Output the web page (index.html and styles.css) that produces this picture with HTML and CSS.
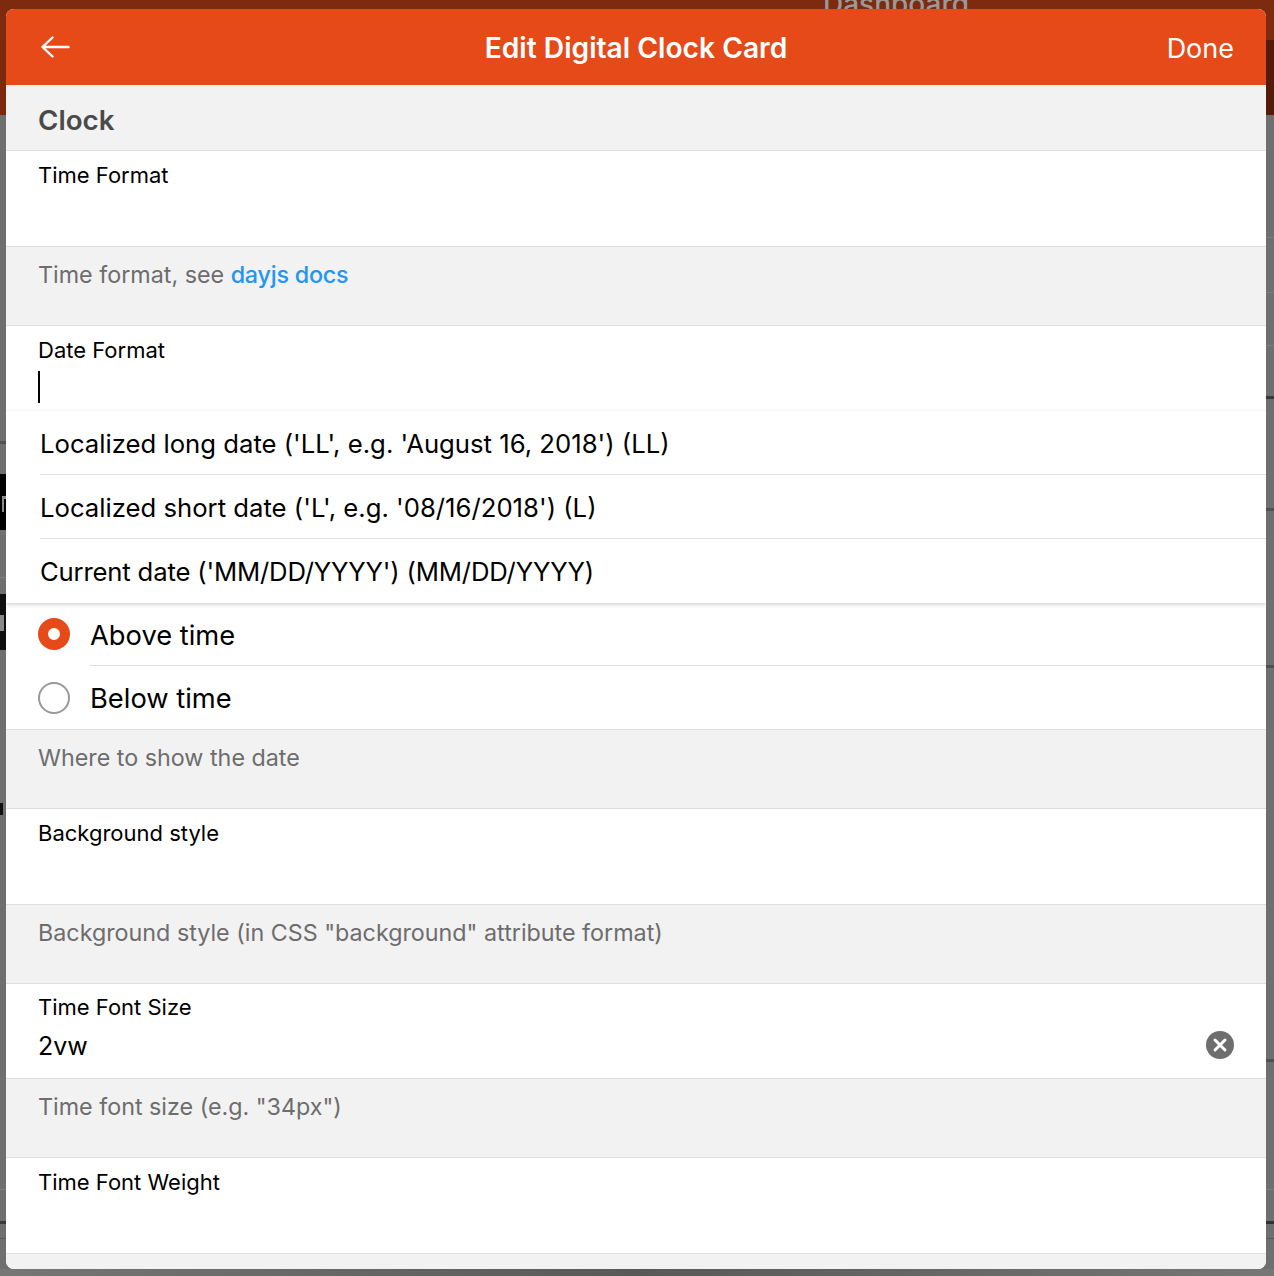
FILE: index.html
```html
<!DOCTYPE html>
<html lang="en">
<head>
<meta charset="utf-8">
<title>Edit Digital Clock Card</title>
<link rel="stylesheet" href="styles.css">
</head>
<body>
<div class="backdrop-title">Dashboard</div>
<main class="sheet">
  <header class="navbar">
    <button class="nav-back" aria-label="Back">
      <svg class="back-icon" viewBox="0 0 30 24" width="30" height="24"><path d="M28.5 12H2.5M12.5 2.5 2.5 12l10 9.500" fill="none" stroke="#fff" stroke-width="2.400" stroke-linecap="round" stroke-linejoin="round"/></svg>
    </button>
    <h1 class="nav-title">Edit Digital Clock Card</h1>
    <span class="nav-done">Done</span>
  </header>

  <h2 class="block-title">Clock</h2>

  <section class="field">
    <label class="field-label">Time Format</label>
    <div class="field-value"></div>
  </section>
  <p class="help">Time format, see <a class="help-link" href="#">dayjs docs</a></p>

  <section class="field field-date">
    <label class="field-label">Date Format</label>
    <div class="field-value"><span class="caret"></span></div>
  </section>
  <ul class="suggestions">
    <li class="suggestion">Localized long date ('LL', e.g. 'August 16, 2018') (LL)</li>
    <li class="suggestion">Localized short date ('L', e.g. '08/16/2018') (L)</li>
    <li class="suggestion">Current date ('MM/DD/YYYY') (MM/DD/YYYY)</li>
  </ul>

  <ul class="radios">
    <li class="radio-row">
      <span class="radio radio-on"></span>
      <span class="radio-text radio-text-line">Above time</span>
    </li>
    <li class="radio-row">
      <span class="radio"></span>
      <span class="radio-text">Below time</span>
    </li>
  </ul>
  <p class="help">Where to show the date</p>

  <section class="field">
    <label class="field-label">Background style</label>
    <div class="field-value"></div>
  </section>
  <p class="help">Background style (in CSS "background" attribute format)</p>

  <section class="field field-short">
    <label class="field-label">Time Font Size</label>
    <div class="field-value field-filled">
      <span class="value-text">2vw</span>
      <svg class="clear-icon" viewBox="0 0 28 28" width="28" height="28"><circle cx="14" cy="14" r="14" fill="#6e6e6e"/><path d="M9 9l10 10M19 9 9 19" stroke="#fff" stroke-width="3" stroke-linecap="round"/></svg>
    </div>
  </section>
  <p class="help">Time font size (e.g. "34px")</p>

  <section class="field">
    <label class="field-label">Time Font Weight</label>
    <div class="field-value"></div>
  </section>
  <div class="sheet-tail"></div>
</main>
</body>
</html>
```

FILE: styles.css
```css
* { box-sizing: border-box; }

html, body { margin: 0; height: 1276px; overflow: hidden; }

body {
  position: relative;
  padding: 9px 8px 7px 6px;
  font-family: Inter, "Liberation Sans", sans-serif;
  color: #000;
  background:
    /* dimmed page behind the sheet: top bar */
    linear-gradient(#7d2a0e 0 40px, transparent 40px) 0 0 / 100% 115px no-repeat,
    linear-gradient(90deg, #7b280e 0 6px, #541b08 6px) 0 0 / 100% 115px no-repeat,
    /* left edge */
    linear-gradient(#8a8a8a 0 0) 2px 496px / 4px 3px no-repeat,
    linear-gradient(#8a8a8a 0 0) 2px 496px / 2px 16px no-repeat,
    linear-gradient(#000 0 0) 0 474px / 6px 56px no-repeat,
    linear-gradient(#8a8a8a 0 0) 0 615px / 4px 16px no-repeat,
    linear-gradient(#0f0f0f 0 0) 0 594px / 6px 56px no-repeat,
    linear-gradient(#505050 0 0) 0 441px / 6px 3px no-repeat,
    linear-gradient(#7e7e7e 0 0) 0 577px / 6px 1px no-repeat,
    linear-gradient(#111 0 0) 0 803px / 3px 12px no-repeat,
    linear-gradient(#7e7e7e 0 0) 0 1189px / 6px 1px no-repeat,
    linear-gradient(#3a3a3a 0 0) 0 1221px / 6px 3px no-repeat,
    linear-gradient(#5a5a5a 0 0) 0 1238px / 6px 1px no-repeat,
    /* right edge */
    linear-gradient(#7e7e7e 0 0) 1266px 237px / 8px 1px no-repeat,
    linear-gradient(#7e7e7e 0 0) 1266px 292px / 8px 1px no-repeat,
    linear-gradient(#7e7e7e 0 0) 1266px 345px / 8px 1px no-repeat,
    linear-gradient(#3a3a3a 0 0) 1266px 396px / 8px 3px no-repeat,
    linear-gradient(#505050 0 0) 1266px 508px / 8px 3px no-repeat,
    linear-gradient(#505050 0 0) 1266px 665px / 8px 3px no-repeat,
    linear-gradient(#505050 0 0) 1266px 1059px / 8px 3px no-repeat,
    linear-gradient(#7e7e7e 0 0) 1266px 1189px / 8px 1px no-repeat,
    linear-gradient(#333 0 0) 1266px 1221px / 8px 3px no-repeat,
    linear-gradient(#5a5a5a 0 0) 1266px 1238px / 8px 1px no-repeat,
    /* bottom edge */
    linear-gradient(90deg, #767676, #585858 50%, #767676) 0 1269px / 100% 7px no-repeat,
    #6f6f6f;
}

.backdrop-title {
  position: absolute;
  top: -8px;
  left: 823px;
  font-size: 28px;
  line-height: 24px;
  font-weight: 500;
  color: #9a9a9a;
}

.sheet {
  position: relative;
  display: flex;
  flex-direction: column;
  height: 1260px;
  overflow: hidden;
  border-radius: 8px;
  background: #fff;
}

.navbar {
  flex: none;
  display: grid;
  grid-template-columns: 1fr auto 1fr;
  align-items: center;
  height: 76px;
  padding: 0 32px 0 34px;
  background: #e64a19;
  color: #fff;
}

.nav-back { display: flex; padding: 0; border: 0; background: none; }
.back-icon { display: block; margin-bottom: 1px; }

.nav-title {
  margin: 3px 2px 0 0;
  font-size: 28.200px;
  line-height: 73px;
  font-weight: 600;
}

.nav-done { margin-top: 3px; font-size: 27px; line-height: 73px; text-align: right; }

.block-title {
  flex: none;
  margin: 0;
  height: 66px;
  padding: 19px 32px 0;
  border-bottom: 1px solid #e0e0e0;
  background: #f2f2f2;
  color: #4a4a4a;
  font-size: 27.700px;
  line-height: 33px;
  font-weight: 600;
}

.field {
  flex: none;
  height: 96px;
  padding: 10px 32px 0;
  border-bottom: 1px solid #e0e0e0;
}

.field-date { height: 84px; border-bottom: 0; }
.field-short { height: 95px; padding-top: 9px; }

.field-label { display: block; font-size: 22px; line-height: 28px; }

.field-value {
  display: flex;
  align-items: center;
  justify-content: space-between;
  height: 42px;
  font-size: 25px;
}

.field-filled { margin-top: 3px; }
.value-text { margin-top: 2px; }

.caret { width: 2px; height: 32px; margin-top: 4px; background: #000; }

.clear-icon { display: block; }

.help {
  flex: none;
  margin: 0;
  height: 79px;
  padding: 13px 32px 0;
  border-bottom: 1px solid #e0e0e0;
  background: #f2f2f2;
  color: #6d6d6d;
  font-size: 23.300px;
  line-height: 30px;
}

.help-link { color: #2196f3; font-weight: 500; letter-spacing: -.2px; text-decoration: none; }

.suggestions {
  position: relative;
  flex: none;
  margin: 0;
  padding: 0;
  list-style: none;
  border-top: 1px solid #f6f6f6;
  box-shadow: 0 2px 4px rgba(0, 0, 0, .16);
}

.suggestion {
  height: 64px;
  margin-left: 34px;
  border-bottom: 1px solid #e0e0e0;
  font-size: 25.700px;
  line-height: 66px;
}

.suggestion:last-child { border-bottom: 0; letter-spacing: -.18px; }

.radios { flex: none; margin: 0; padding: 0; list-style: none; border-bottom: 1px solid #e0e0e0; }

.radio-row {
  display: flex;
  align-items: center;
  height: 63px;
  padding-left: 32px;
  font-size: 27.300px;
}

.radio-row + .radio-row { padding-top: 2px; }

.radio {
  flex: none;
  width: 32px;
  height: 32px;
  margin: -2px 20px 0 0;
  border: 2px solid #999;
  border-radius: 50%;
}

.radio-on { border: 10px solid #e64a19; background: #fff; }

.radio-text { flex: 1; line-height: 65px; }
.radio-text-line { height: 63px; border-bottom: 1px solid #e0e0e0; }

.sheet-tail { flex: 1; background: #f2f2f2; }
```
